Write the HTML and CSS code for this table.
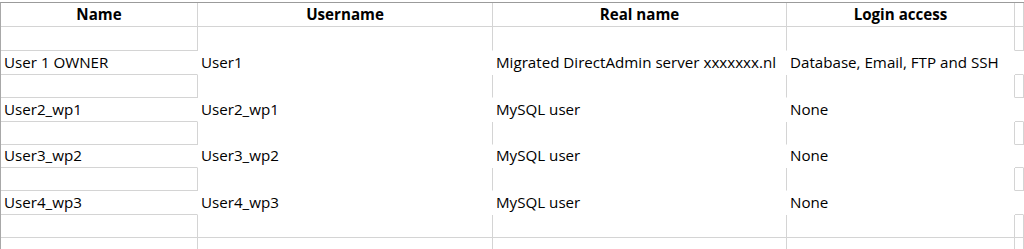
FILE: index.html
```html
<!DOCTYPE html>
<html lang="en">
<head>
<meta charset="utf-8">
<title>Users</title>
<link rel="stylesheet" href="styles.css">
</head>
<body>
<div class="sheet">
  <div class="row head h24">
    <div class="cell a">Name</div>
    <div class="cell b">Username</div>
    <div class="cell c">Real name</div>
    <div class="cell d">Login access</div>
    <div class="cell e"></div>
  </div>
  <div class="row gap h24">
    <div class="cell a"></div><div class="cell b"></div><div class="cell c"></div><div class="cell d"></div><div class="cell e"></div>
  </div>
  <div class="row data h24">
    <div class="cell a">User 1 OWNER</div>
    <div class="cell b">User1</div>
    <div class="cell c">Migrated DirectAdmin server xxxxxxx.nl</div>
    <div class="cell d">Database, Email, FTP and SSH</div>
    <div class="cell e"></div>
  </div>
  <div class="row gap h23">
    <div class="cell a"></div><div class="cell b"></div><div class="cell c"></div><div class="cell d"></div><div class="cell e"></div>
  </div>
  <div class="row data h24">
    <div class="cell a">User2_wp1</div>
    <div class="cell b">User2_wp1</div>
    <div class="cell c">MySQL user</div>
    <div class="cell d">None</div>
    <div class="cell e"></div>
  </div>
  <div class="row gap h23">
    <div class="cell a"></div><div class="cell b"></div><div class="cell c"></div><div class="cell d"></div><div class="cell e"></div>
  </div>
  <div class="row data h23">
    <div class="cell a">User3_wp2</div>
    <div class="cell b">User3_wp2</div>
    <div class="cell c">MySQL user</div>
    <div class="cell d">None</div>
    <div class="cell e"></div>
  </div>
  <div class="row gap h23">
    <div class="cell a"></div><div class="cell b"></div><div class="cell c"></div><div class="cell d"></div><div class="cell e"></div>
  </div>
  <div class="row data h24">
    <div class="cell a">User4_wp3</div>
    <div class="cell b">User4_wp3</div>
    <div class="cell c">MySQL user</div>
    <div class="cell d">None</div>
    <div class="cell e"></div>
  </div>
  <div class="row gap full h23">
    <div class="cell a"></div><div class="cell b"></div><div class="cell c"></div><div class="cell d"></div><div class="cell e"></div>
  </div>
  <div class="row tail">
    <div class="cell a"></div><div class="cell b"></div><div class="cell c"></div><div class="cell d"></div><div class="cell e"></div>
  </div>
</div>
</body>
</html>
```

FILE: styles.css
```css
html, body {
  margin: 0;
  padding: 0;
  background: #ffffff;
  overflow: hidden;
}

body {
  font-family: "Open Sans", "Liberation Sans", sans-serif;
  font-size: 15.15px;
  color: #000000;
}

.sheet {
  margin-top: 2px;
  border-top: 1px solid #9b9b9b;
  border-left: 1px solid #a8a8a8;
  width: 1023px;
}

.row {
  display: grid;
  grid-template-columns: 197px 295px 294px 228px 1fr;
}

.h24 { height: 24px; }
.h23 { height: 23px; }
.tail { height: 12px; }

.cell {
  box-sizing: border-box;
  padding-left: 3px;
  white-space: nowrap;
  overflow: visible;
  display: flex;
  align-items: flex-end;
  padding-bottom: 3px;
  line-height: 17px;
  border-right: 1px solid transparent;
  border-bottom: 1px solid transparent;
}

.head .cell {
  font-weight: bold;
  justify-content: center;
  padding-left: 0;
  border-right-color: #d4d4d4;
  border-bottom-color: #d4d4d4;
}

.gap .cell,
.tail .cell {
  border-right-color: #d4d4d4;
}

.gap .a, .gap .e,
.data .a, .data .e {
  border-bottom-color: #d4d4d4;
}

.full .cell {
  border-bottom-color: #d4d4d4;
}
```
